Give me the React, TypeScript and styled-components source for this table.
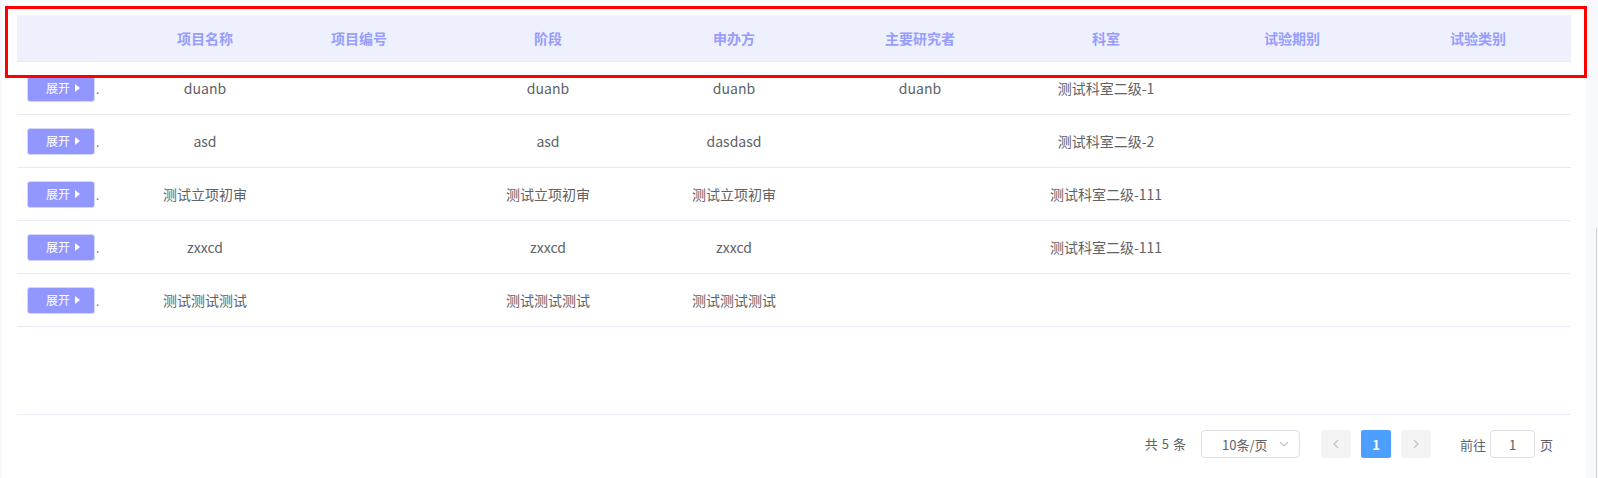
import React from "react";
import styled, { createGlobalStyle } from "styled-components";

const Global = createGlobalStyle`
  html, body { margin: 0; padding: 0; background: #f8f9fe; }
  body { font-family: "Microsoft YaHei", "Noto Sans CJK SC", "Noto Sans", sans-serif; }
  * { box-sizing: border-box; }
`;

const Page = styled.div`
  position: relative;
  display: flex;
  width: 1598px;
  height: 478px;
  padding-left: 2px;
  background: #f8f9fe;
  overflow: hidden;
`;

const Card = styled.div`
  width: 1584px;
  height: 478px;
  background: #fff;
  border-top-left-radius: 4px;
  border-top-right-radius: 4px;
  padding: 15px 15px 0 15px;
  display: flex;
  flex-direction: column;
`;

const ScrollTrack = styled.div`
  flex: 1;
  display: flex;
  justify-content: flex-end;
  padding-right: 1px;
`;

const ScrollThumb = styled.div`
  width: 1px;
  margin-top: 228px;
  height: 250px;
  background: #cfd0d6;
`;

const TableWrap = styled.div`
  height: 400px;
  border-bottom: 1px solid #e9eaf3;
`;

const Row = styled.div<{ $head?: boolean }>`
  display: grid;
  grid-template-columns: 130px 116px 192px repeat(6, 1fr);
  height: ${(p) => (p.$head ? 47 : 53)}px;
  align-items: center;
  background: ${(p) => (p.$head ? "#eff0fe" : "#fff")};
  border-bottom: 1px solid #e8e9f3;
`;

const HeadCell = styled.div`
  text-align: center;
  font-size: 14px;
  font-weight: 700;
  line-height: 20px;
  color: #979dff;
`;

const Cell = styled.div`
  text-align: center;
  font-size: 14px;
  line-height: 20px;
  color: #606266;
  white-space: nowrap;
`;

const ExpandCell = styled.div`
  display: flex;
  align-items: flex-end;
  padding-left: 10px;
`;

const ExpandButton = styled.button`
  width: 68px;
  height: 27px;
  border: 1px solid #d4d7fb;
  border-radius: 3px;
  background: #9197fe;
  color: #fff;
  font-family: inherit;
  font-size: 12px;
  line-height: 14px;
  padding: 0 0 0 4px;
  display: flex;
  align-items: center;
  justify-content: center;
  gap: 5px;
  cursor: pointer;
`;

const Dot = styled.span`
  font-size: 12px;
  line-height: 14px;
  color: #a0704a;
  margin-left: 1px;
  margin-bottom: 6px;
`;

const Pager = styled.div`
  display: flex;
  align-items: center;
  justify-content: flex-end;
  padding: 15px 18px 0 0;
  font-size: 13px;
  color: #606266;
`;

const Total = styled.span`
  display: flex;
  gap: 4px;
  margin-right: 15px;
  line-height: 28px;
`;

const Select = styled.div`
  width: 99px;
  height: 28px;
  border: 1px solid #dcdfe6;
  border-radius: 4px;
  display: flex;
  align-items: center;
  padding: 0 10px 0 20px;
  margin-right: 21px;
  color: #606266;
`;

const SelectText = styled.span`
  flex: 1;
`;

const PageBtn = styled.div<{ $active?: boolean }>`
  width: 30px;
  height: 28px;
  border-radius: 2px;
  display: flex;
  align-items: center;
  justify-content: center;
  background: ${(p) => (p.$active ? "#4d9fff" : "#f4f4f5")};
  color: ${(p) => (p.$active ? "#fff" : "#c0c4cc")};
  font-weight: 700;
  font-size: 13px;
  margin-right: 10px;
`;

const Jumper = styled.div`
  display: flex;
  align-items: center;
  margin-left: 19px;
  gap: 4px;
`;

const JumpInput = styled.div`
  width: 45px;
  height: 28px;
  border: 1px solid #dcdfe6;
  border-radius: 4px;
  display: flex;
  align-items: center;
  justify-content: center;
  color: #606266;
  margin-right: 1px;
`;

const Annotation = styled.div`
  position: absolute;
  left: 5px;
  top: 6px;
  width: 1582px;
  height: 72px;
  border: 3px solid #ff0000;
  pointer-events: none;
`;

const Caret = () => (
  <svg width="5" height="8" viewBox="0 0 5 8">
    <polygon points="0,0 5,4 0,8" fill="#fff" />
  </svg>
);

const Chevron = ({ dir }: { dir: "left" | "right" | "down" }) => {
  const d =
    dir === "left"
      ? "M6 1 L2 5 L6 9"
      : dir === "right"
      ? "M2 1 L6 5 L2 9"
      : "M1 3 L5 7 L9 3";
  return (
    <svg width={dir === "down" ? 10 : 8} height="10" viewBox={dir === "down" ? "0 0 10 10" : "0 0 8 10"}>
      <path d={d} fill="none" stroke="#c0c4cc" strokeWidth="1.2" />
    </svg>
  );
};

const headers = ["项目名称", "项目编号", "阶段", "申办方", "主要研究者", "科室", "试验期别", "试验类别"];

const rows: string[][] = [
  ["duanb", "", "duanb", "duanb", "duanb", "测试科室二级-1", "", ""],
  ["asd", "", "asd", "dasdasd", "", "测试科室二级-2", "", ""],
  ["测试立项初审", "", "测试立项初审", "测试立项初审", "", "测试科室二级-111", "", ""],
  ["zxxcd", "", "zxxcd", "zxxcd", "", "测试科室二级-111", "", ""],
  ["测试测试测试", "", "测试测试测试", "测试测试测试", "", "", "", ""],
];

export default function App() {
  return (
    <>
      <Global />
      <Page>
        <Card>
          <TableWrap>
            <Row $head>
              <div />
              {headers.map((h) => (
                <HeadCell key={h}>{h}</HeadCell>
              ))}
            </Row>
            {rows.map((r, i) => (
              <Row key={i}>
                <ExpandCell>
                  <ExpandButton>
                    展开 <Caret />
                  </ExpandButton>
                  <Dot>.</Dot>
                </ExpandCell>
                {r.map((c, j) => (
                  <Cell key={j}>{c}</Cell>
                ))}
              </Row>
            ))}
          </TableWrap>
          <Pager>
            <Total>
              <span>共</span>
              <span>5</span>
              <span>条</span>
            </Total>
            <Select>
              <SelectText>10条/页</SelectText>
              <Chevron dir="down" />
            </Select>
            <PageBtn>
              <Chevron dir="left" />
            </PageBtn>
            <PageBtn $active>1</PageBtn>
            <PageBtn>
              <Chevron dir="right" />
            </PageBtn>
            <Jumper>
              前往
              <JumpInput>1</JumpInput>
              页
            </Jumper>
          </Pager>
        </Card>
        <ScrollTrack>
          <ScrollThumb />
        </ScrollTrack>
        <Annotation />
      </Page>
    </>
  );
}
